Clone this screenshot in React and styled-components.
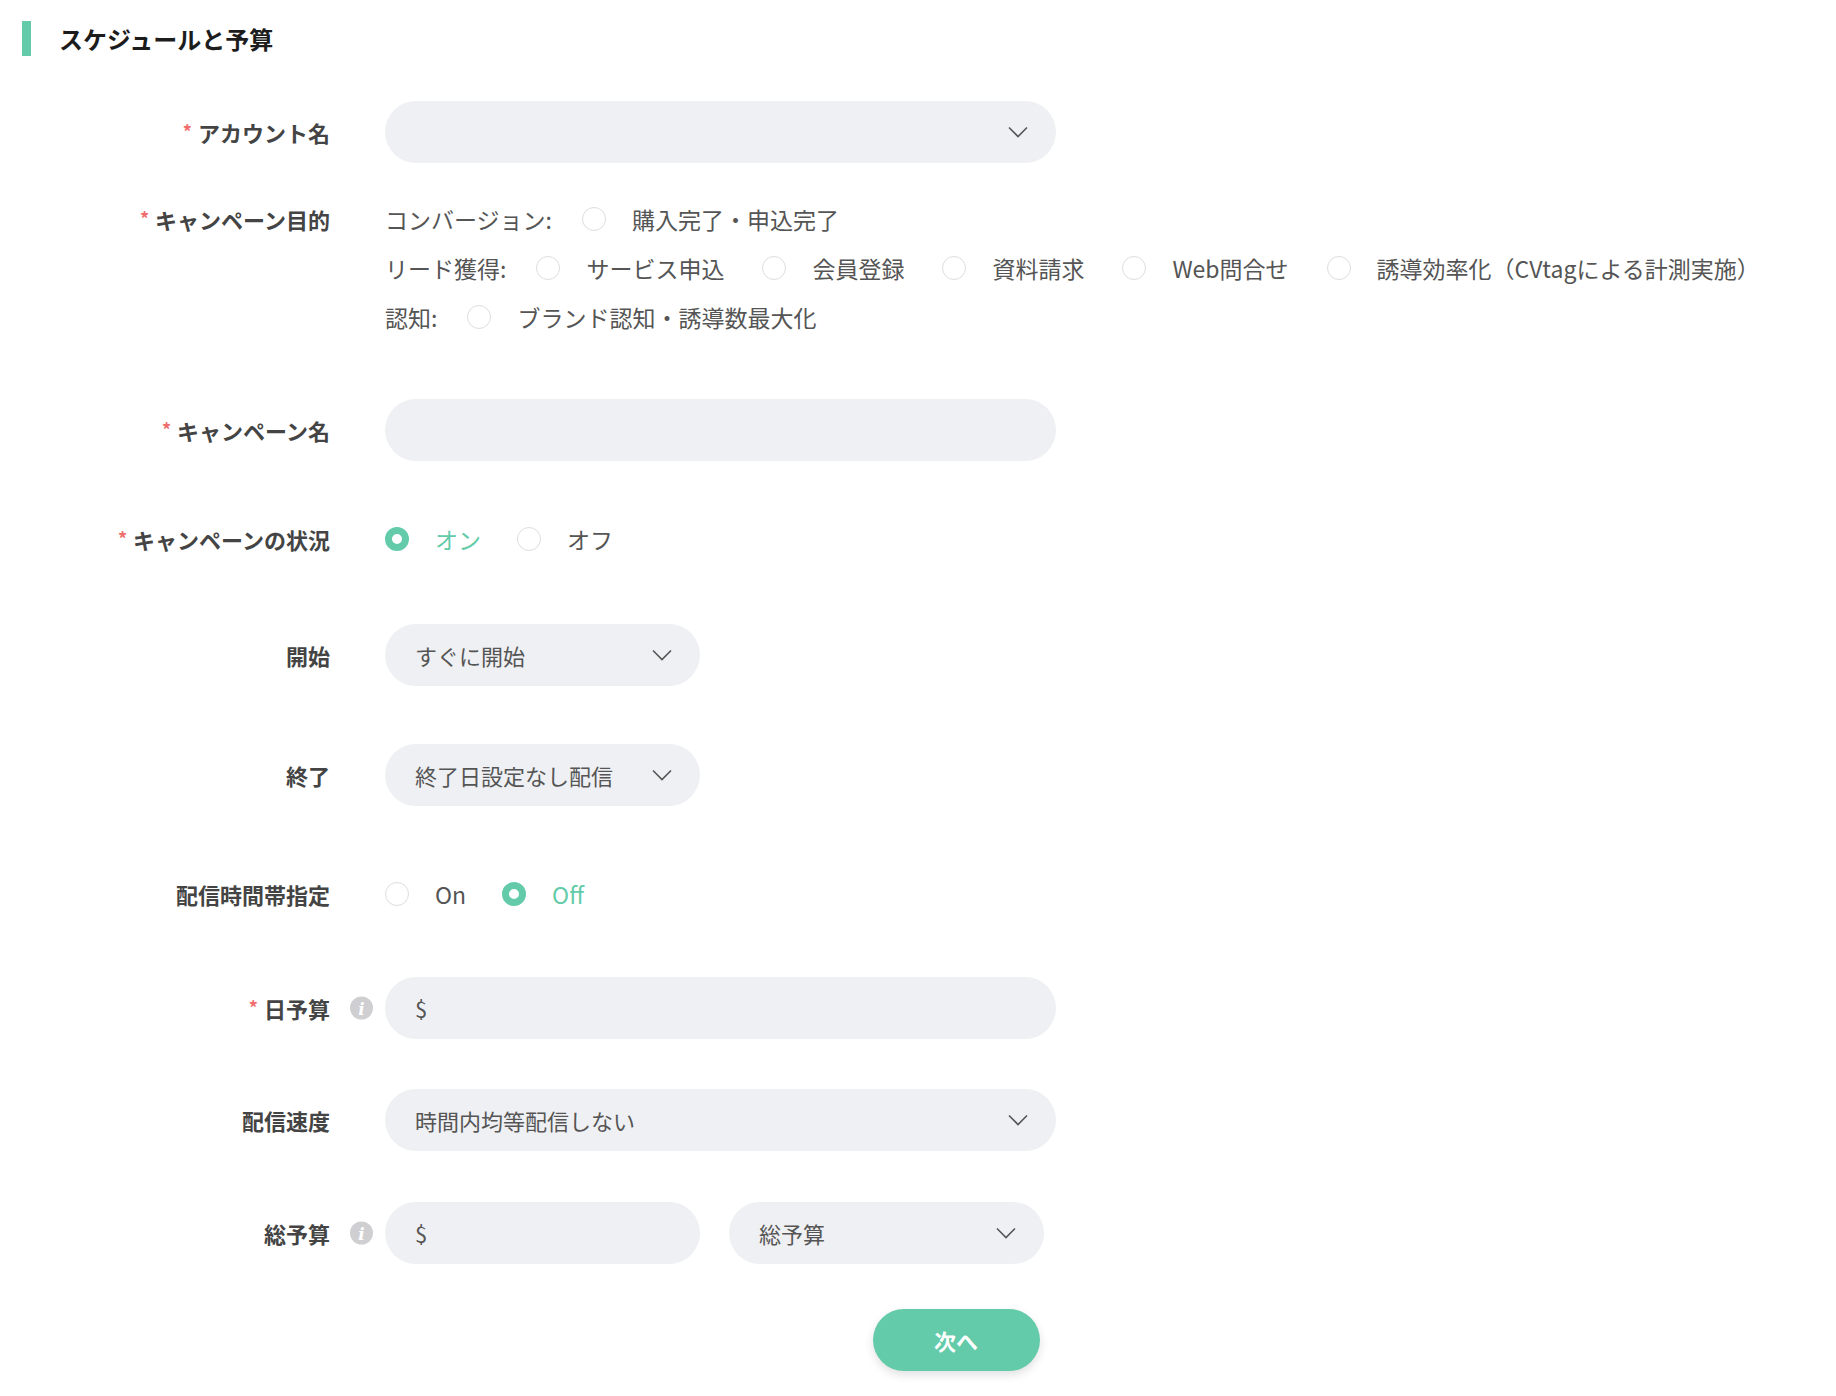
import styled, { createGlobalStyle } from 'styled-components'

const GlobalStyle = createGlobalStyle`
  body {
    margin: 0;
    background: #fff;
    font-family: "Noto Sans CJK JP", "Noto Sans", sans-serif;
  }
`

const GREEN = '#63cba9'

const Page = styled.div`
  width: 1836px;
  padding: 21px 0 30px 0;
`

const Title = styled.h2`
  margin: 0 0 0 22px;
  height: 35px;
  display: flex;
  align-items: center;
  border-left: 9px solid ${GREEN};
  padding-left: 28px;
  font-size: 24px;
  font-weight: 700;
  color: #1c1c1c;
`

const Row = styled.div`
  display: grid;
  grid-template-columns: 330px 1fr;
  column-gap: 55px;
  align-items: ${p => (p.$top ? 'start' : 'center')};
  margin-top: ${p => p.$mt}px;
  min-height: ${p => (p.$top ? 0 : 62)}px;
`

const Label = styled.div`
  position: relative;
  text-align: right;
  font-size: 22px;
  font-weight: 700;
  color: #444;
  line-height: ${p => (p.$top ? '49px' : 'normal')};
`

const Star = styled.span`
  color: #ef6d6d;
  font-size: 18px;
  margin-right: 6px;
  vertical-align: 3px;
`

const Info = styled.span`
  position: absolute;
  right: -43px;
  top: 50%;
  transform: translateY(-50%);
  width: 23px;
  height: 23px;
  border-radius: 50%;
  background: #cfcfd2;
  color: #fff;
  font-family: "DejaVu Serif", serif;
  font-style: italic;
  font-size: 17px;
  font-weight: 700;
  display: flex;
  align-items: center;
  justify-content: center;
`

const Field = styled.div`
  width: ${p => p.$w}px;
  height: 62px;
  box-sizing: border-box;
  border-radius: 31px;
  background: #eff0f3;
  display: flex;
  align-items: center;
  justify-content: space-between;
  padding: 0 28px 0 30px;
  font-size: 22px;
  color: #555;
`

const Chevron = () => (
  <svg width="20" height="12" viewBox="0 0 20 12" fill="none" stroke="#555" strokeWidth="1.6">
    <path d="M1 1.5 L10 10.5 L19 1.5" />
  </svg>
)

const Pair = styled.div`
  display: flex;
  gap: 29px;
`

const Lines = styled.div`
  display: flex;
  flex-direction: column;
`

const Line = styled.div`
  height: 49px;
  display: flex;
  align-items: center;
  font-size: 23px;
  color: #555;
`

const Prefix = styled.span`
  margin-right: 30px;
`

const Option = styled.label`
  display: flex;
  align-items: center;
  gap: 26px;
  margin-right: ${p => p.$mr ?? 38}px;
  font-size: 23px;
  color: ${p => (p.$checked ? GREEN : '#555')};
`

const Radio = styled.span`
  width: 24px;
  height: 24px;
  box-sizing: border-box;
  border-radius: 50%;
  border: ${p => (p.$checked ? `7px solid ${GREEN}` : '1.5px solid #dcdde2')};
  background: #fff;
  flex-shrink: 0;
`

const Radios = styled.div`
  display: flex;
  align-items: center;
`

const ButtonRow = styled.div`
  display: flex;
  justify-content: center;
  padding-left: 76px;
  margin-top: 45px;
`

const NextButton = styled.button`
  width: 167px;
  height: 62px;
  border: none;
  border-radius: 31px;
  background: ${GREEN};
  color: #fff;
  font-family: inherit;
  font-size: 22px;
  font-weight: 700;
  box-shadow: 0 4px 10px rgba(0, 0, 0, 0.12);
`

const Opt = ({ checked, children, mr }) => (
  <Option $checked={checked} $mr={mr}>
    <Radio $checked={checked} />
    {children}
  </Option>
)

export default function App() {
  return (
    <Page>
      <GlobalStyle />
      <Title>スケジュールと予算</Title>

      <Row $mt={45}>
        <Label><Star>*</Star>アカウント名</Label>
        <Field $w={671}><span /><Chevron /></Field>
      </Row>

      <Row $mt={31} $top>
        <Label $top><Star>*</Star>キャンペーン目的</Label>
        <Lines>
          <Line><Prefix>コンバージョン:</Prefix><Opt>購入完了・申込完了</Opt></Line>
          <Line>
            <Prefix>リード獲得:</Prefix>
            <Opt>サービス申込</Opt>
            <Opt>会員登録</Opt>
            <Opt>資料請求</Opt>
            <Opt>Web問合せ</Opt>
            <Opt mr={0}>誘導効率化（CVtagによる計測実施）</Opt>
          </Line>
          <Line><Prefix>認知:</Prefix><Opt>ブランド認知・誘導数最大化</Opt></Line>
        </Lines>
      </Row>

      <Row $mt={58}>
        <Label><Star>*</Star>キャンペーン名</Label>
        <Field $w={671} />
      </Row>

      <Row $mt={47}>
        <Label><Star>*</Star>キャンペーンの状況</Label>
        <Radios>
          <Opt checked mr={36}>オン</Opt>
          <Opt>オフ</Opt>
        </Radios>
      </Row>

      <Row $mt={54}>
        <Label>開始</Label>
        <Field $w={315}>すぐに開始<Chevron /></Field>
      </Row>

      <Row $mt={58}>
        <Label>終了</Label>
        <Field $w={315}>終了日設定なし配信<Chevron /></Field>
      </Row>

      <Row $mt={57}>
        <Label>配信時間帯指定</Label>
        <Radios>
          <Opt mr={36}>On</Opt>
          <Opt checked>Off</Opt>
        </Radios>
      </Row>

      <Row $mt={52}>
        <Label><Star>*</Star>日予算<Info>i</Info></Label>
        <Field $w={671}>$<span /></Field>
      </Row>

      <Row $mt={50}>
        <Label>配信速度</Label>
        <Field $w={671}>時間内均等配信しない<Chevron /></Field>
      </Row>

      <Row $mt={51}>
        <Label>総予算<Info>i</Info></Label>
        <Pair>
          <Field $w={315}>$<span /></Field>
          <Field $w={315}>総予算<Chevron /></Field>
        </Pair>
      </Row>

      <ButtonRow>
        <NextButton>次へ</NextButton>
      </ButtonRow>
    </Page>
  )
}
